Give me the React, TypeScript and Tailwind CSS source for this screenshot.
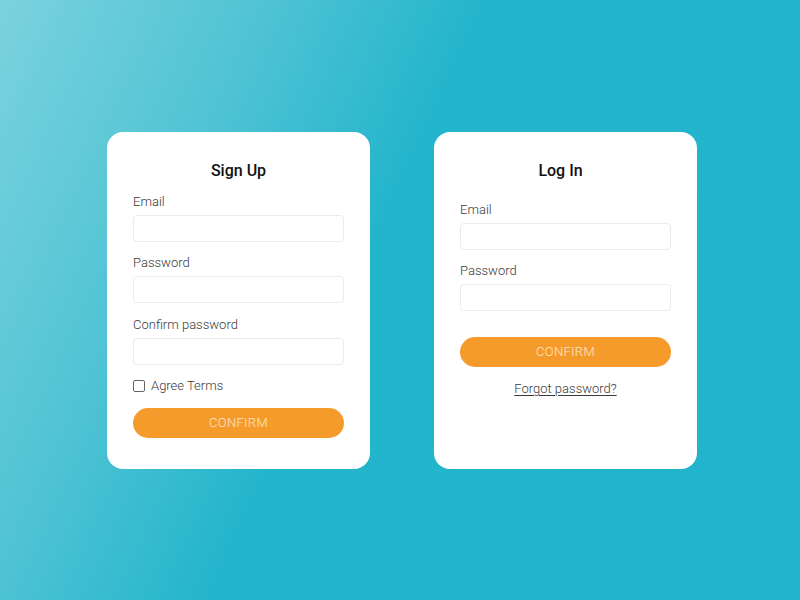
import { ReactNode } from 'react';

// Labelled text field used in both auth cards
function Field({ label, type = 'text' }: { label: string; type?: string }) {
  return (
    <div className="flex flex-col">
      <label className="text-[13px] leading-[18px] font-light text-[#3a3a3a]">{label}</label>
      <input
        type={type}
        className="mt-1 h-[27px] w-full rounded-[4px] border border-[#ebebeb] bg-white px-2 text-[13px] outline-none"
      />
    </div>
  );
}

function ConfirmButton() {
  return (
    <button className="h-[30px] w-full rounded-full bg-[#f59b2c] text-[13px] font-light tracking-[0.3px] text-[#fde6c8]">
      CONFIRM
    </button>
  );
}

function Card({ title, titleClass = '', children }: { title: string; titleClass?: string; children: ReactNode }) {
  return (
    <div className="flex h-[337px] w-[263px] flex-col rounded-[16px] bg-white px-[26px] pt-[27px]">
      <h2 className={`text-center text-[16px] leading-[24px] font-medium text-[#111] ${titleClass}`}>{title}</h2>
      {children}
    </div>
  );
}

export default function App() {
  return (
    <div
      className="flex h-[600px] w-[800px] items-center justify-center gap-[64px] pl-1 bg-[linear-gradient(115deg,#7bd2de_0%,#4fc3d4_25%,#23b5cc_45%,#22b4cc_100%)]"
      style={{ fontFamily: 'Roboto, "Liberation Sans", sans-serif' }}
    >
      <Card title="Sign Up">
        <div className="mt-[10px] flex flex-col gap-[12.5px]">
          <Field label="Email" />
          <Field label="Password" type="password" />
          <Field label="Confirm password" type="password" />
          <label className="flex h-[18px] items-center gap-[6px] text-[13px] font-light text-[#3a3a3a]">
            <span className="h-[12px] w-[12px] rounded-[2px] border border-[#666]" />
            Agree Terms
          </label>
        </div>
        <div className="mt-[13px]">
          <ConfirmButton />
        </div>
      </Card>

      <Card title="Log In" titleClass="pr-[10px]">
        <div className="mt-[18px] flex flex-col gap-[12.5px]">
          <Field label="Email" />
          <Field label="Password" type="password" />
        </div>
        <div className="mt-[26px]">
          <ConfirmButton />
        </div>
        <a className="mt-[13px] text-center text-[13px] leading-[18px] font-light text-[#3a3a3a] underline underline-offset-2">
          Forgot password?
        </a>
      </Card>
    </div>
  );
}
